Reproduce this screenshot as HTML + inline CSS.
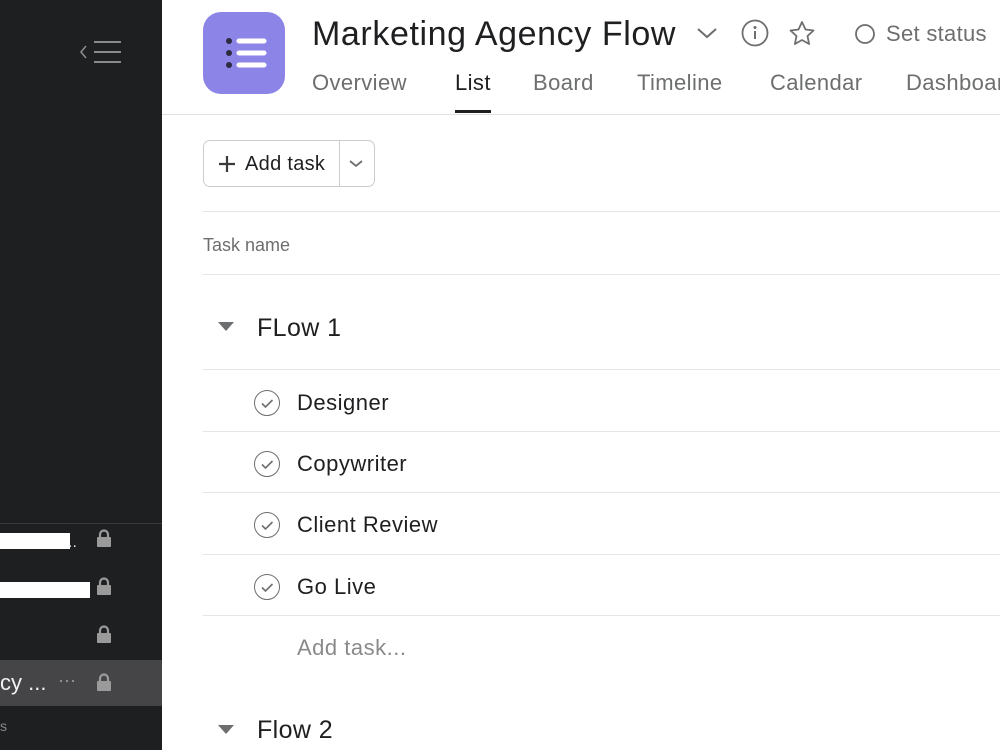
<!DOCTYPE html>
<html><head><style>
*{margin:0;padding:0;box-sizing:border-box}
body{width:1000px;height:750px;overflow:hidden;background:#fff;font-family:"Liberation Sans",sans-serif;position:relative;color:#1e1f21}
.sb{position:absolute;left:0;top:0;width:162px;height:750px;background:#1e1f21}
.a{position:absolute}
.tab{position:absolute;top:70px;font-size:22px;letter-spacing:0.4px;color:#6d6e6f}
.row{position:absolute;left:203px;right:0;border-bottom:1px solid #e6e6e6}
.task{position:absolute;left:297px;font-size:22px;letter-spacing:0.5px;color:#1e1f21}
.chk{position:absolute;left:254px;width:26px;height:26px;border:1.5px solid #6d6e6f;border-radius:50%}
.lock{position:absolute;left:95px;width:18px;height:19px}
.wb{position:absolute;background:#fff}
</style></head><body>
<div class="sb">
 <svg class="a" style="left:78px;top:40px" width="46" height="24"><path d="M8 6 L3 12 L8 18" stroke="#8a8a8a" stroke-width="1.6" fill="none"/><path d="M16 2H43M16 12H43M16 22H43" stroke="#8a8a8a" stroke-width="2"/></svg>
 <div class="a" style="left:0;top:523px;width:162px;height:1px;background:#3a3b3d"></div>
 <div class="wb" style="left:0;top:533px;width:70px;height:16px"></div>
 <div class="a" style="left:68px;top:534px;color:#ddd;font-size:16px">..</div>
 <div class="wb" style="left:0;top:582px;width:90px;height:16px"></div>
 <div class="a" style="left:0;top:660px;width:162px;height:46px;background:#454547"></div>
 <div class="a" style="left:0;top:670px;color:#f0f0f0;font-size:22px">cy ...</div>
 <div class="a" style="left:58px;top:670px;color:#999;font-size:18px">···</div>
 <div class="a" style="left:0;top:718px;color:#888;font-size:14px">s</div>
 <svg class="lock" style="top:529px"><path d="M5 8V5.5a4 4 0 0 1 8 0V8" stroke="#9a9a9a" stroke-width="2.2" fill="none"/><rect x="2" y="8" width="14" height="10" rx="1" fill="#9a9a9a"/></svg>
 <svg class="lock" style="top:577px"><path d="M5 8V5.5a4 4 0 0 1 8 0V8" stroke="#9a9a9a" stroke-width="2.2" fill="none"/><rect x="2" y="8" width="14" height="10" rx="1" fill="#9a9a9a"/></svg>
 <svg class="lock" style="top:625px"><path d="M5 8V5.5a4 4 0 0 1 8 0V8" stroke="#9a9a9a" stroke-width="2.2" fill="none"/><rect x="2" y="8" width="14" height="10" rx="1" fill="#9a9a9a"/></svg>
 <svg class="lock" style="top:673px"><path d="M5 8V5.5a4 4 0 0 1 8 0V8" stroke="#9a9a9a" stroke-width="2.2" fill="none"/><rect x="2" y="8" width="14" height="10" rx="1" fill="#9a9a9a"/></svg>
</div>
<div class="a" style="left:203px;top:12px;width:82px;height:82px;background:#8d84e8;border-radius:18px">
 <svg width="82" height="82"><circle cx="26" cy="29" r="3" fill="#2d2b40"/><circle cx="26" cy="41" r="3" fill="#2d2b40"/><circle cx="26" cy="53" r="3" fill="#2d2b40"/><path d="M36 29H61M36 41H61M36 53H61" stroke="#fff" stroke-width="5" stroke-linecap="round"/></svg>
</div>
<div class="a" style="left:312px;top:15px;font-size:34px;letter-spacing:0.6px;color:#1e1f21">Marketing Agency Flow</div>
<svg class="a" style="left:695px;top:25px" width="24" height="16"><path d="M3 4l9 8 9-8" stroke="#6d6e6f" stroke-width="2" fill="none"/></svg>
<svg class="a" style="left:740px;top:19px" width="30" height="30"><circle cx="15" cy="14" r="12.5" stroke="#6d6e6f" stroke-width="1.8" fill="none"/><circle cx="15" cy="8.5" r="1.5" fill="#6d6e6f"/><path d="M15 12v8" stroke="#6d6e6f" stroke-width="2"/></svg>
<svg class="a" style="left:788px;top:20px" width="28" height="28"><path d="M14 2l3.5 7.5 8 1-6 5.5 1.6 8L14 20l-7.1 4 1.6-8-6-5.5 8-1z" stroke="#6d6e6f" stroke-width="1.8" fill="none" stroke-linejoin="round"/></svg>
<svg class="a" style="left:854px;top:23px" width="22" height="22"><circle cx="11" cy="11" r="9" stroke="#6d6e6f" stroke-width="1.8" fill="none"/></svg>
<div class="a" style="left:886px;top:21px;font-size:22px;letter-spacing:0.3px;color:#6d6e6f">Set status</div>
<div class="tab" style="left:312px">Overview</div>
<div class="tab" style="left:455px;color:#1e1f21">List</div>
<div class="a" style="left:455px;top:110px;width:36px;height:3px;background:#1e1f21"></div>
<div class="tab" style="left:533px">Board</div>
<div class="tab" style="left:637px">Timeline</div>
<div class="tab" style="left:770px">Calendar</div>
<div class="tab" style="left:906px">Dashboard</div>
<div class="a" style="left:162px;top:114px;right:0;height:1px;background:#e0e0e0"></div>
<div class="a" style="left:203px;top:140px;width:172px;height:47px;border:1.5px solid #cfcbcb;border-radius:7px"></div>
<div class="a" style="left:339px;top:141px;width:1px;height:45px;background:#cfcbcb"></div>
<svg class="a" style="left:218px;top:155px" width="18" height="18"><path d="M9 1v16M1 9h16" stroke="#3a3b3d" stroke-width="2.2"/></svg>
<div class="a" style="left:245px;top:153px;font-size:20px;letter-spacing:0.3px;color:#1e1f21">Add task</div>
<svg class="a" style="left:347px;top:158px" width="18" height="12"><path d="M3 3l6 5 6-5" stroke="#6d6e6f" stroke-width="1.8" fill="none"/></svg>
<div class="row" style="top:211px;height:1px"></div>
<div class="a" style="left:203px;top:235px;font-size:18px;color:#6d6e6f">Task name</div>
<div class="row" style="top:274px;height:1px"></div>
<svg class="a" style="left:216px;top:320px" width="20" height="14"><path d="M2 2h16l-8 9z" fill="#6d6e6f"/></svg>
<div class="a" style="left:257px;top:314px;font-size:25px;letter-spacing:0.4px">FLow 1</div>
<div class="row" style="top:369px;height:1px"></div>
<div class="chk" style="top:390px"></div><svg class="a" style="left:254px;top:390px" width="26" height="26"><path d="M8 13.5l3.5 3.5 7-7" stroke="#6d6e6f" stroke-width="1.6" fill="none"/></svg>
<div class="task" style="top:390px">Designer</div>
<div class="row" style="top:431px;height:1px"></div>
<div class="chk" style="top:451px"></div><svg class="a" style="left:254px;top:451px" width="26" height="26"><path d="M8 13.5l3.5 3.5 7-7" stroke="#6d6e6f" stroke-width="1.6" fill="none"/></svg>
<div class="task" style="top:451px">Copywriter</div>
<div class="row" style="top:492px;height:1px"></div>
<div class="chk" style="top:512px"></div><svg class="a" style="left:254px;top:512px" width="26" height="26"><path d="M8 13.5l3.5 3.5 7-7" stroke="#6d6e6f" stroke-width="1.6" fill="none"/></svg>
<div class="task" style="top:512px">Client Review</div>
<div class="row" style="top:554px;height:1px"></div>
<div class="chk" style="top:574px"></div><svg class="a" style="left:254px;top:574px" width="26" height="26"><path d="M8 13.5l3.5 3.5 7-7" stroke="#6d6e6f" stroke-width="1.6" fill="none"/></svg>
<div class="task" style="top:574px">Go Live</div>
<div class="row" style="top:615px;height:1px"></div>
<div class="task" style="top:635px;color:#8a8a8a">Add task...</div>
<svg class="a" style="left:216px;top:723px" width="20" height="14"><path d="M2 2h16l-8 9z" fill="#6d6e6f"/></svg>
<div class="a" style="left:257px;top:716px;font-size:25px;letter-spacing:0.4px">Flow 2</div>
</body></html>
